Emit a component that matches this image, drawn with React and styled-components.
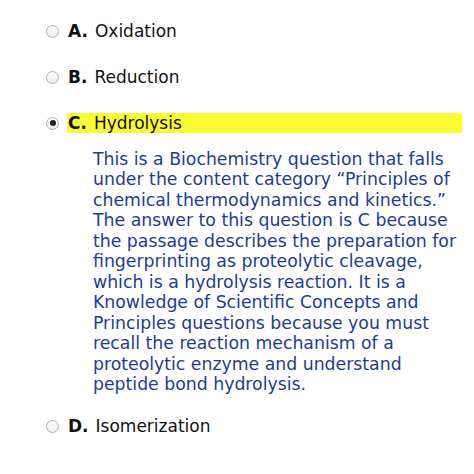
import React from "react";
import styled, { createGlobalStyle } from "styled-components";

const Global = createGlobalStyle`
  html, body { margin: 0; padding: 0; background: #fff; }
  body { font-family: Verdana, "DejaVu Sans", sans-serif; }
`;

const Page = styled.div`
  width: 474px;
  height: 474px;
  padding: 21px 0 0 46px;
  box-sizing: border-box;
  display: flex;
  flex-direction: column;
`;

const Row = styled.div`
  display: flex;
  align-items: center;
  height: 20px;
  margin-bottom: ${(p) => p.$gap}px;
`;

const Radio = styled.span`
  width: 13px;
  height: 13px;
  border-radius: 50%;
  border: 1px solid #b0b0b0;
  background: linear-gradient(#ffffff, #ededed);
  box-sizing: border-box;
  flex: 0 0 auto;
  margin-right: 8px;
  display: flex;
  align-items: center;
  justify-content: center;
  &::after {
    content: "";
    display: ${(p) => (p.$checked ? "block" : "none")};
    width: 6px;
    height: 6px;
    border-radius: 50%;
    background: #222;
  }
`;

const Label = styled.div`
  display: flex;
  align-items: center;
  height: 20px;
  font-size: 17px;
  color: #111;
  padding-left: 1px;
  width: ${(p) => (p.$highlight ? "394px" : "auto")};
  background: ${(p) => (p.$highlight ? "#fbfb33" : "transparent")};
`;

const Letter = styled.b`
  font-weight: bold;
  margin-right: 7px;
`;

const Explanation = styled.p`
  margin: 16px 0 22px 47px;
  width: 380px;
  font-size: 17.3px;
  line-height: 20.45px;
  color: #1c3c98;
  white-space: nowrap;
`;

const options = [
  { l: "A.", t: "Oxidation" },
  { l: "B.", t: "Reduction" },
  { l: "C.", t: "Hydrolysis", checked: true },
];

const lines = [
  "This is a Biochemistry question that falls",
  "under the content category “Principles of",
  "chemical thermodynamics and kinetics.”",
  "The answer to this question is C because",
  "the passage describes the preparation for",
  "fingerprinting as proteolytic cleavage,",
  "which is a hydrolysis reaction. It is a",
  "Knowledge of Scientific Concepts and",
  "Principles questions because you must",
  "recall the reaction mechanism of a",
  "proteolytic enzyme and understand",
  "peptide bond hydrolysis.",
];

export default function App() {
  return (
    <>
      <Global />
      <Page>
        {options.map((o) => (
          <Row key={o.l} $gap={o.checked ? 0 : 26}>
            <Radio $checked={o.checked} />
            <Label $highlight={o.checked}>
              <Letter>{o.l}</Letter>
              {o.t}
            </Label>
          </Row>
        ))}
        <Explanation>
          {lines.map((line, i) => (
            <React.Fragment key={i}>
              {line}
              {i < lines.length - 1 && <br />}
            </React.Fragment>
          ))}
        </Explanation>
        <Row $gap={0}>
          <Radio />
          <Label>
            <Letter>D.</Letter>
            Isomerization
          </Label>
        </Row>
      </Page>
    </>
  );
}
